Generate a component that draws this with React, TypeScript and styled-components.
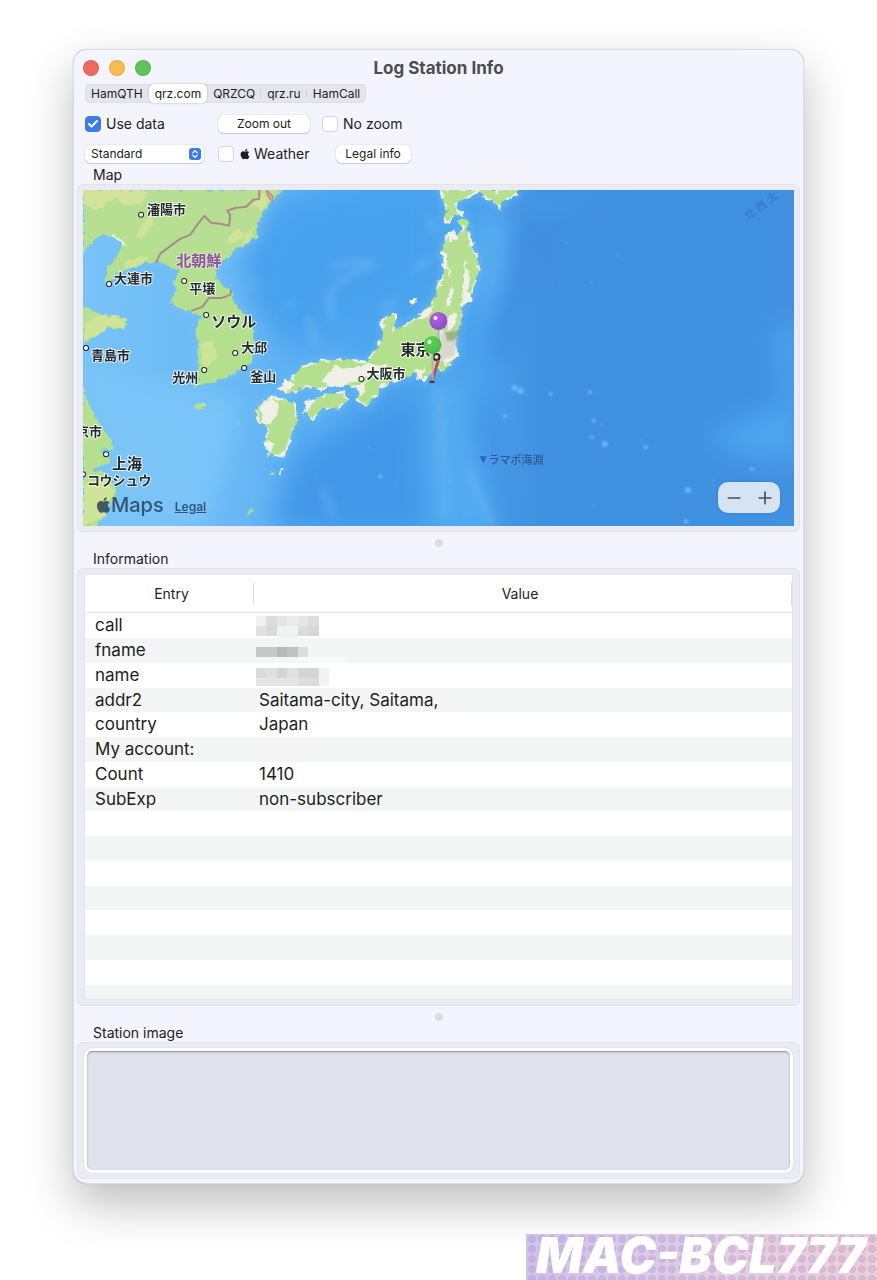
import React, { useState } from 'react';
import styled, { createGlobalStyle } from 'styled-components';
import { FaApple } from 'react-icons/fa';
import { Check, ChevronsUpDown, Minus, Plus } from 'lucide-react';

const uiFont = `Inter, "Liberation Sans", "Noto Sans CJK JP", sans-serif`;
const mapFont = `Inter, "Noto Sans CJK JP", sans-serif`;

const GlobalStyle = createGlobalStyle`
  *, *::before, *::after { box-sizing: border-box; }
  body { margin: 0; background: #fff; color: #1d1d22; font-family: ${uiFont}; font-size: 14px; }
  button, input, select { font: inherit; color: inherit; margin: 0; }
`;

const Page = styled.div`
  overflow: hidden;
  padding-top: 49px;
`;

const Window = styled.main`
  margin: 0 73px;
  padding: 0 3px 4px;
  border: 1px solid #dedee6;
  border-radius: 14px;
  background: #f4f4fe;
  box-shadow: 0 0 1px rgba(0, 0, 0, 0.25), 0 20px 46px rgba(0, 0, 0, 0.26);
`;

const TitleBar = styled.header`
  display: grid;
  grid-template-columns: 1fr auto 1fr;
  align-items: center;
  height: 34px;
  padding: 1px 6px 0;
`;

const Lights = styled.div`
  display: flex;
  gap: 10px;
`;

const Light = styled.button<{ $color: string }>`
  width: 16px;
  height: 16px;
  padding: 0;
  border: 1px solid rgba(0, 0, 0, 0.08);
  border-radius: 50%;
  background: ${(p) => p.$color};
`;

const Title = styled.h1`
  margin: 0;
  font-size: 17px;
  line-height: 20px;
  font-weight: 700;
  color: #4c4c52;
`;

const Controls = styled.div`
  padding: 0 8px 1px;
`;

const Segments = styled.div`
  display: inline-flex;
  height: 19px;
  margin-bottom: 1px;
  border-radius: 5px;
  background: #e5e5ef;
  box-shadow: inset 0 0 0 1px #dddde7;
  vertical-align: top;
`;

const Segment = styled.button<{ $active: boolean; $divided: boolean }>`
  position: relative;
  padding: 0 6px;
  border: 0;
  border-radius: 5px;
  font-size: 12px;
  line-height: 19px;
  background: ${(p) => (p.$active ? '#fff' : 'transparent')};
  box-shadow: ${(p) => (p.$active ? '0 0 2px rgba(0, 0, 0, 0.3)' : 'none')};

  &::after {
    content: '';
    display: ${(p) => (p.$divided ? 'block' : 'none')};
    position: absolute;
    right: 0;
    top: 5px;
    bottom: 5px;
    width: 1px;
    background: #cfcfda;
  }
`;

const ControlRow = styled.div`
  display: flex;
  align-items: center;
  height: 20px;
  margin-top: 10px;
`;

const LeadCell = styled.div`
  display: flex;
  width: 133px;
`;

const CheckLabel = styled.label`
  display: flex;
  align-items: center;
  gap: 5px;
  font-size: 14px;
  line-height: 20px;
`;

const CheckBox = styled.span`
  display: grid;
  width: 16px;
  height: 16px;

  input, svg { grid-area: 1 / 1; }

  input {
    appearance: none;
    width: 16px;
    height: 16px;
    border: 1px solid #d3d3dc;
    border-radius: 4px;
    background: #fff;
  }

  input:checked { border-color: #3c7be8; background: #3c7be8; }
  svg { margin: 2px; color: #fff; visibility: hidden; pointer-events: none; }
  input:checked + svg { visibility: visible; }
`;

const PushButton = styled.button<{ $wide?: boolean }>`
  width: ${(p) => (p.$wide ? 92 : 75)}px;
  height: 18px;
  padding: 0;
  border: 0;
  border-radius: 5px;
  background: #fff;
  box-shadow: 0 0 1px rgba(0, 0, 0, 0.35), 0 1px 1px rgba(0, 0, 0, 0.14);
  font-size: 12px;
  line-height: 18px;
`;

const SelectWrap = styled.div`
  display: grid;
  align-items: center;
  width: 119px;
  height: 18px;
  border-radius: 5px;
  background: #fff;
  box-shadow: 0 0 1px rgba(0, 0, 0, 0.35), 0 1px 1px rgba(0, 0, 0, 0.14);

  select {
    grid-area: 1 / 1;
    appearance: none;
    height: 18px;
    padding: 0 20px 0 6px;
    border: 0;
    background: transparent;
    font-size: 12px;
    line-height: 18px;
  }
`;

const Stepper = styled.span`
  grid-area: 1 / 1;
  justify-self: end;
  display: grid;
  place-items: center;
  width: 12px;
  height: 12px;
  margin-right: 3px;
  border-radius: 3px;
  background: #3c7be8;
  color: #fff;
  pointer-events: none;
`;

const Spacer = styled.span<{ $size: number }>`
  width: ${(p) => p.$size}px;
`;

const WeatherText = styled.span`
  display: flex;
  align-items: center;
  gap: 3px;
`;

const SectionLabel = styled.h2`
  margin: 0;
  padding: 0 16px;
  height: 19px;
  font-size: 14px;
  line-height: 19px;
  font-weight: 400;
`;

const GroupBox = styled.section`
  padding: 5px;
  border: 1px solid #e3e3ed;
  border-radius: 6px;
  background: #ebebf6;
`;

const Splitter = styled.div`
  display: flex;
  justify-content: center;
  height: 17px;
  padding-top: 7px;

  &::before {
    content: '';
    width: 8px;
    height: 8px;
    border-radius: 50%;
    background: #dcdce5;
  }
`;

const MapFrame = styled.div`
  position: relative;
  height: 336px;
  overflow: hidden;

  > svg { display: block; width: 100%; height: 100%; }
`;

const MapCredit = styled.div`
  position: absolute;
  left: 13px;
  bottom: 9px;
  display: flex;
  align-items: center;
  color: rgba(34, 58, 78, 0.8);
  font-size: 20px;
  line-height: 24px;
  font-weight: 500;

  svg { width: 15px; height: 18px; }

  a {
    margin: 4px 0 0 11px;
    color: inherit;
    font-size: 12px;
    line-height: 16px;
    font-weight: 600;
  }
`;

const ZoomPad = styled.div`
  position: absolute;
  right: 14px;
  bottom: 13px;
  display: flex;
  border-radius: 10px;
  background: #d5e3f3;
  box-shadow: 0 0 3px rgba(0, 0, 0, 0.15);

  button {
    display: grid;
    place-items: center;
    width: 31px;
    height: 31px;
    padding: 0;
    border: 0;
    background: none;
    color: #45505c;
  }
`;

const TableFrame = styled.div`
  margin: 0 1px;
  height: 426px;
  overflow: hidden;
  border: 1px solid #e4e4ea;
  background: #fff;
`;

const Table = styled.table`
  width: 100%;
  border-collapse: collapse;
  table-layout: fixed;

  th {
    position: relative;
    height: 37px;
    padding: 0;
    border-bottom: 1px solid #e3e3e5;
    font-size: 14px;
    font-weight: 400;
  }

  th:first-child { width: 169px; padding-left: 4px; }
  th:last-child { padding-right: 6px; }

  th::after {
    content: '';
    position: absolute;
    right: 0;
    top: 8px;
    height: 22px;
    width: 1px;
    background: #dcdcdf;
  }

  td {
    height: 25px;
    padding: 0 0 0 10px;
    font-size: 17px;
    line-height: 24px;
    white-space: nowrap;
  }

  td + td { padding-left: 5px; }
  tbody tr:nth-child(4n) td { height: 24px; }
  tbody tr:nth-child(even) { background: #f4f6f5; }
`;

const Mosaic = styled.svg`
  display: block;
  margin-left: -3px;
`;

const ImageWell = styled.div`
  margin: 0 1px;
  height: 125px;
  border: 3px solid #fff;
  border-radius: 8px;
  background: #e2e2ec;
  box-shadow: 0 0 1px rgba(0, 0, 0, 0.25), inset 0 1px 2px rgba(0, 0, 0, 0.4);
`;

const Footer = styled.footer`
  position: relative;
  display: flex;
  justify-content: flex-end;
  margin-top: 50px;
`;

const Watermark = styled.div`
  width: 351px;
  height: 46px;
  padding-left: 10px;
  background:
    radial-gradient(circle at 50% 50%, rgba(150, 120, 205, 0.24) 0 4px, transparent 4px) 1px 0 / 10px 10px,
    linear-gradient(100deg, #cfc3ea 0%, #dccbe6 38%, #e6cfdd 65%, #eccfd5 100%);
  color: #fff;
  font-size: 49px;
  line-height: 44px;
  font-weight: 900;
  font-style: italic;
  white-space: nowrap;
`;

type Place = { name: string; x: number; y: number; size?: number; dot?: [number, number] };

const places: Place[] = [
  { name: '瀋陽市', x: 64, y: 24, dot: [58, 25] },
  { name: '大連市', x: 31, y: 93, dot: [26, 94] },
  { name: '平壌', x: 106, y: 103, dot: [101, 91] },
  { name: 'ソウル', x: 128, y: 137, size: 15, dot: [123, 125] },
  { name: '大邱', x: 158, y: 162, dot: [152, 163] },
  { name: '青島市', x: 8, y: 170, dot: [3, 158] },
  { name: '光州', x: 89, y: 192, dot: [121, 180] },
  { name: '釜山', x: 167, y: 191, dot: [161, 178] },
  { name: '大阪市', x: 283, y: 188, dot: [278, 189] },
  { name: '東京', x: 317, y: 165, size: 15, dot: [353, 167] },
  { name: '京市', x: -7, y: 246 },
  { name: '上海', x: 29, y: 279, size: 15, dot: [23, 264] },
  { name: 'コウシュウ', x: 4, y: 295, dot: [0, 284] },
];

const continent = [
  // Manchuria and the Korean peninsula
  'M0 0H198L184 17 174 34 173 47 157 57 145 67 137 72 132 87 147 101 152 114 164 127 170 144 169 171 154 182 140 189 124 194 112 197 115 184 114 164 115 151 112 141 119 127 107 121 94 117 85 111 94 101 90 91 97 82 87 77 72 72 60 72 47 79 34 84 22 94 22 84 34 66 40 56 29 46 15 46 4 59 0 62Z',
  // Shandong
  'M0 119L10 120 19 126 34 126 44 128 42 139 24 139 10 147 0 154Z',
  // Shanghai coast
  'M0 196L7 217 17 236 30 252 30 258 17 260 27 271 10 279 24 284 32 297 32 307 17 331 15 336H0Z',
  // Jeju
  'M111 217L114 213 121 212 123 215 117 220Z',
];

const japan = [
  // Kyushu
  'M197 209L187 206 172 219 177 231 185 241 182 251 184 262 197 267 204 257 209 241 214 229 210 214Z',
  // Shikoku
  'M224 214L237 206 260 202 264 209 254 219 240 217 229 231 222 221Z',
  // Honshu
  'M195 199L204 192 220 176 237 171 264 169 284 172 290 163 300 147 299 131 309 124 312 127 309 141 324 134 337 124 350 111 357 91 362 77 357 67 360 54 365 44 374 46 380 37 375 34 375 32 384 33 385 46 389 56 395 71 394 84 387 107 379 117 377 134 372 147 374 164 364 177 357 182 353 176 347 182 340 191 337 181 324 187 300 194 292 206 284 217 274 209 274 197 260 192 237 199 224 197 204 204Z',
  // Hokkaido
  'M357 0L359 11 364 21 360 29 365 32 370 24 379 25 370 17 374 11 387 7 393 2 405 9 417 19 420 12 434 4 436 0Z',
];

const landShapes = [...continent, ...japan];

const cityAreas = [
  'M364 44L371 41 374 49 367 53Z',
  'M385 44L391 56 386 57Z',
  'M358 61L363 63 364 78 369 90 364 82 359 71 357 65Z',
  'M380 71L384 79 386 90 384 101 388 108 377 117 379 101 382 89Z',
  'M370 95L367 115 362 119 365 105Z',
  'M365 125L371 123 373 132 367 141 360 151 364 138Z',
  'M353 140L372 148 373 166 361 175 354 168Z',
  'M333 131L340 120 350 116 344 127Z',
  'M238 191L251 177 270 178 280 174 302 175 306 182 289 186 271 192 249 197Z',
  'M193 199L203 190 211 194 203 203Z',
  'M176 217L189 206 196 217 188 234 180 233Z',
  'M221 213L232 207 226 219Z',
  'M273 197L284 192 282 199 276 207Z',
  'M331 182L341 178 340 187 335 189Z',
  'M184 250L191 256 185 265 182 258Z',
  'M206 246L208 250 202 265 198 268 203 257Z',
];

const hills = [
  'M0 0H66L58 14 42 16 32 9 14 20 0 16Z',
  'M143 47L154 39 162 45 155 52 145 54Z',
  'M42 72L58 67 65 70 54 77 41 78Z',
  'M178 5L186 8 178 21 170 14Z',
  'M170 39L166 52 159 55 163 43Z',
  'M4 131L22 124 43 130 42 139 28 137 6 149 0 149Z',
  'M0 294L22 288 32 304 18 315 23 326 0 336Z',
  'M117 154L130 150 133 167 122 181 118 170Z',
  'M66 25L70 33 61 48 53 45Z',
];

const seaSparks: [number, number, number][] = [
  [482, 53, 1], [534, 66, 1], [507, 93, 1], [506, 202, 2], [510, 231, 2], [518, 235, 1],
  [508, 247, 2], [521, 254, 3], [558, 251, 1], [562, 257, 2], [604, 300, 3], [629, 290, 1],
  [668, 279, 2], [602, 331, 2], [510, 316, 1], [431, 198, 3], [437, 201, 3], [467, 204, 2], [421, 226, 2],
  [350, 204, 1], [355, 218, 1], [364, 232, 1], [361, 251, 1], [366, 291, 1], [155, 233, 2],
  [193, 126, 1], [297, 286, 2], [286, 257, 1], [373, 328, 1], [367, 211, 1],
];

function JapanMap() {
  return (
    <svg viewBox="0 0 710 336" preserveAspectRatio="xMinYMid slice" role="img" aria-label="Map of Japan and Korea">
      <defs>
        <linearGradient id="sea" x1="0" y1="0" x2="1" y2="0">
          <stop offset="0" stopColor="#78c3f8" />
          <stop offset="0.22" stopColor="#68b8f5" />
          <stop offset="0.4" stopColor="#4da5ef" />
          <stop offset="0.56" stopColor="#4ba2ed" />
          <stop offset="0.65" stopColor="#4090e1" />
          <stop offset="1" stopColor="#4191e2" />
        </linearGradient>
        <linearGradient id="land" x1="0" y1="0" x2="0" y2="1">
          <stop offset="0" stopColor="#b7df93" />
          <stop offset="1" stopColor="#b2e08c" />
        </linearGradient>
        <filter id="soft" x="-50%" y="-50%" width="200%" height="200%" colorInterpolationFilters="sRGB">
          <feGaussianBlur stdDeviation="12" />
        </filter>
        <filter id="shore" x="-20%" y="-20%" width="140%" height="140%" colorInterpolationFilters="sRGB">
          <feGaussianBlur stdDeviation="5" />
        </filter>
        <filter id="mist" x="-50%" y="-50%" width="200%" height="200%" colorInterpolationFilters="sRGB">
          <feGaussianBlur stdDeviation="4" />
        </filter>
        <filter id="glint" x="-50%" y="-50%" width="200%" height="200%" colorInterpolationFilters="sRGB">
          <feGaussianBlur stdDeviation="1" />
        </filter>
        <filter id="rough" x="-5%" y="-5%" width="110%" height="110%" colorInterpolationFilters="sRGB">
          <feTurbulence type="fractalNoise" baseFrequency="0.14" numOctaves="3" seed="4" result="n" />
          <feDisplacementMap in="SourceGraphic" in2="n" scale="7" xChannelSelector="R" yChannelSelector="G" />
        </filter>
        <radialGradient id="purplePin" cx="0.35" cy="0.3" r="0.8">
          <stop offset="0" stopColor="#b162de" />
          <stop offset="1" stopColor="#8f45c8" />
        </radialGradient>
        <radialGradient id="greenPin" cx="0.35" cy="0.3" r="0.8">
          <stop offset="0" stopColor="#62d45a" />
          <stop offset="1" stopColor="#46b944" />
        </radialGradient>
      </defs>

      <rect width="710" height="336" fill="url(#sea)" />

      <g filter="url(#soft)">
        <path d="M200 10L350 0 350 90 300 120 210 160 172 120 160 70Z" fill="#48a1ed" />
        <path d="M0 180L110 200 160 210 140 290 120 340H0Z" fill="#7ac4f8" />
        <path d="M218 260L270 235 335 205 340 300 345 340H190L200 300Z" fill="#4397e8" />
        <path d="M190 215L260 215 225 260 195 290Z" fill="#58aef2" />
        <path d="M345 190L385 190 395 250 415 336H345L338 260Z" fill="#52abf0" />
        <path d="M398 30L425 25 420 95 394 130Z" fill="#5bb0f1" />
        <path d="M436 30L460 20 440 110 420 180 412 160Z" fill="#3d8ade" />
        <path d="M400 190L425 290 440 345 420 345 392 240Z" fill="#3f8fe1" />
        <path d="M440 0H520L480 20 450 32Z" fill="#4696e6" />
        <path d="M690 140L715 130V270L660 265 620 245 700 215Z" fill="#4da6ee" />
      </g>

      <g filter="url(#mist)" fill="none" stroke="#79bff4" strokeLinecap="round" opacity="0.45">
        <path d="M252 95Q270 82 290 74M250 78Q270 66 290 76" strokeWidth="6" />
        <path d="M246 102L248 128M300 118L310 112M226 130L232 152" strokeWidth="8" />
        <path d="M198 118L212 112M165 100L172 92" strokeWidth="4" />
        <path d="M355 200L362 330M385 280L408 334" strokeWidth="6" />
        <path d="M240 300L250 325" strokeWidth="6" />
        <path d="M330 80L345 70M345 30L352 42" strokeWidth="6" />
      </g>

      <g filter="url(#shore)" fill="#78c3f5" opacity="0.6">
        {landShapes.map((d) => (
          <path key={d} d={d} stroke="#78c3f5" strokeWidth="4" />
        ))}
      </g>

      <g filter="url(#rough)">
        {continent.map((d) => (
          <path key={d} d={d} fill="url(#land)" />
        ))}
        {japan.map((d) => (
          <path key={d} d={d} fill="url(#land)" stroke="#eef1e6" strokeWidth="2" strokeDasharray="9 7 4 12 14 6" />
        ))}
        <path d="M375 33L377 29 383 28 385 34Z" fill="url(#land)" />
        {hills.map((d) => (
          <path key={d} d={d} fill="#dbe69c" opacity="0.7" />
        ))}
        {cityAreas.map((d) => (
          <path key={d} d={d} fill="#f0f0e9" />
        ))}
        <path d="M196 285L199 278M30 45L42 56M372 17L380 24" stroke="#e8f1e6" strokeWidth="2" />
        <path d="M163 325L170 320M187 284L191 282" stroke="#a5db8f" strokeWidth="3" />
        <circle cx="412" cy="2" r="2" fill="#f0f0e9" />
        <circle cx="330" cy="112" r="3" fill="#eef1e6" />
      </g>

      <g fill="none" stroke="#ad8b8c" strokeWidth="2" strokeLinejoin="round">
        <path d="M73 73L77 64 86 57 97 49 107 45 114 35 121 26 128 33 137 34 146 36 147 25 144 21 153 18 163 17 170 10 176 9 176 0" />
        <path d="M108 121L119 117 126 108 139 108 147 105 148 100" />
      </g>
      <path d="M183 0L190 7 189 12 185 7Z" fill="#e0a093" stroke="#c77f77" />

      <g fill="#7cc8f6" filter="url(#glint)">
        {seaSparks.map(([x, y, r]) => (
          <circle key={`${x}-${y}`} cx={x} cy={y} r={r} opacity="0.7" />
        ))}
      </g>

      <g fontFamily={mapFont} fontWeight="700" paintOrder="stroke" strokeLinejoin="round">
        {places.map((p) => (
          <g key={p.name}>
            {p.dot && <circle cx={p.dot[0]} cy={p.dot[1]} r="2" fill="#fff" stroke="#222" strokeWidth="2" />}
            <text x={p.x} y={p.y} fontSize={p.size ?? 13} fill="#222a2c" stroke="#fff" strokeOpacity="0.8" strokeWidth="2">
              {p.name}
            </text>
          </g>
        ))}
        <text x="93" y="76" fontSize="15" fill="#8b5794" stroke="#e7e7dd" strokeOpacity="0.7" strokeWidth="2">北朝鮮</text>
      </g>

      <g fontFamily={mapFont} fill="#2d5b91">
        <path d="M396 266H403L400 273Z" fill="#2d62c8" />
        <text x="405" y="274" fontSize="11" fontWeight="500">ラマポ海淵</text>
        <text transform="translate(664 31) rotate(-37)" fontSize="11" opacity="0.45" fontWeight="500">北 西 太</text>
      </g>

      <path d="M357 143L374 139 371 166 355 171Z" fill="#d9d8cf" filter="url(#glint)" />
      <path d="M361 142L378 140 372 150 364 151Z" fill="#80a35c" opacity="0.7" filter="url(#glint)" />
      <circle cx="353" cy="167" r="3" fill="#ddd" stroke="#252525" strokeWidth="2" />
      <path d="M348 192L355 170" stroke="#b84f5b" strokeWidth="3" />
      <path d="M355 136V162M349 160V190" stroke="#a7b4b4" strokeWidth="2" />
      <path d="M346 192H351" stroke="#493c3e" strokeWidth="2" />
      <circle cx="349" cy="155" r="9" fill="url(#greenPin)" />
      <circle cx="346" cy="152" r="2" fill="#eaffea" />
      <circle cx="355" cy="131" r="9" fill="url(#purplePin)" />
      <circle cx="352" cy="128" r="2" fill="#f7e8ff" />
    </svg>
  );
}

type Cell = [x: number, y: number, w: number, h: number, color: string];

const hidden: Record<string, Cell[]> = {
  call: [
    [0, 3, 10, 10, '#f1f1f1'], [10, 3, 11, 10, '#dddddd'], [21, 3, 10, 10, '#e4e4e4'], [31, 3, 11, 10, '#eaeaea'],
    [42, 3, 10, 10, '#e5e5e5'], [52, 3, 11, 10, '#dddddd'], [0, 13, 10, 10, '#e1e1e1'], [10, 13, 11, 10, '#d9d9d9'],
    [21, 13, 21, 12, '#f1f3f3'], [42, 13, 10, 10, '#dcdcdc'], [52, 13, 11, 10, '#d7d7d7'],
  ],
  fname: [
    [0, 9, 21, 10, '#c8c8c8'], [21, 9, 10, 10, '#b9b9b9'], [31, 9, 11, 10, '#c2c2c2'], [42, 9, 10, 10, '#dedede'],
    [42, 19, 48, 6, '#f8faf9'],
  ],
  name: [
    [0, 5, 10, 10, '#dadada'], [10, 5, 11, 10, '#e0e0e0'], [21, 5, 10, 10, '#d5d5d5'], [31, 5, 11, 10, '#e1e1e1'],
    [42, 5, 21, 10, '#d5d5d5'], [63, 5, 10, 18, '#f2f2f2'], [0, 15, 42, 8, '#e6e6e6'], [42, 15, 21, 8, '#dddddd'],
  ],
};

const records: [string, string][] = [
  ['call', ''],
  ['fname', ''],
  ['name', ''],
  ['addr2', 'Saitama-city, Saitama,'],
  ['country', 'Japan'],
  ['My account:', ''],
  ['Count', '1410'],
  ['SubExp', 'non-subscriber'],
];

const emptyRows = Array.from({ length: 8 }, (_, i) => i);
const sources = ['HamQTH', 'qrz.com', 'QRZCQ', 'qrz.ru', 'HamCall'];

function Tick({ checked, onChange, children }: { checked: boolean; onChange: (v: boolean) => void; children: React.ReactNode }) {
  return (
    <CheckLabel>
      <CheckBox>
        <input type="checkbox" checked={checked} onChange={(e) => onChange(e.target.checked)} />
        <Check size={12} strokeWidth={4} />
      </CheckBox>
      {children}
    </CheckLabel>
  );
}

export default function App() {
  const [source, setSource] = useState('qrz.com');
  const [useData, setUseData] = useState(true);
  const [noZoom, setNoZoom] = useState(false);
  const [weather, setWeather] = useState(false);

  return (
    <>
      <GlobalStyle />
      <Page>
        <Window>
          <TitleBar>
            <Lights>
              <Light $color="#ec6a5e" aria-label="Close" />
              <Light $color="#f5bd4f" aria-label="Minimize" />
              <Light $color="#5fc454" aria-label="Full screen" />
            </Lights>
            <Title>Log Station Info</Title>
          </TitleBar>

          <Controls>
            <Segments role="group" aria-label="Data source">
              {sources.map((s, i) => (
                <Segment
                  key={s}
                  $active={s === source}
                  $divided={i < sources.length - 1 && s !== source && sources[i + 1] !== source}
                  aria-pressed={s === source}
                  onClick={() => setSource(s)}
                >
                  {s}
                </Segment>
              ))}
            </Segments>
            <ControlRow>
              <LeadCell>
                <Tick checked={useData} onChange={setUseData}>Use data</Tick>
              </LeadCell>
              <PushButton $wide>Zoom out</PushButton>
              <Spacer $size={12} />
              <Tick checked={noZoom} onChange={setNoZoom}>No zoom</Tick>
            </ControlRow>
            <ControlRow>
              <LeadCell>
                <SelectWrap>
                  <select aria-label="Map type" defaultValue="Standard">
                    <option>Standard</option>
                    <option>Satellite</option>
                    <option>Hybrid</option>
                  </select>
                  <Stepper><ChevronsUpDown size={10} strokeWidth={3} /></Stepper>
                </SelectWrap>
              </LeadCell>
              <Tick checked={weather} onChange={setWeather}>
                <WeatherText>
                  <FaApple size={12} />
                  Weather
                </WeatherText>
              </Tick>
              <Spacer $size={26} />
              <PushButton>Legal info</PushButton>
            </ControlRow>
          </Controls>

          <SectionLabel>Map</SectionLabel>
          <GroupBox>
            <MapFrame>
              <JapanMap />
              <MapCredit>
                <FaApple />
                Maps
                <a href="#legal">Legal</a>
              </MapCredit>
              <ZoomPad>
                <button aria-label="Zoom map out"><Minus size={20} strokeWidth={2} /></button>
                <button aria-label="Zoom map in"><Plus size={20} strokeWidth={2} /></button>
              </ZoomPad>
            </MapFrame>
          </GroupBox>

          <Splitter />
          <SectionLabel>Information</SectionLabel>
          <GroupBox>
            <TableFrame>
              <Table>
                <thead>
                  <tr>
                    <th scope="col">Entry</th>
                    <th scope="col">Value</th>
                  </tr>
                </thead>
                <tbody>
                  {records.map(([entry, value]) => (
                    <tr key={entry}>
                      <td>{entry}</td>
                      <td>
                        {hidden[entry] ? (
                          <Mosaic width="90" height="25" aria-label="Hidden value">
                            {hidden[entry].map(([x, y, w, h, color]) => (
                              <rect key={`${x}-${y}`} x={x} y={y} width={w} height={h} fill={color} />
                            ))}
                          </Mosaic>
                        ) : (
                          value
                        )}
                      </td>
                    </tr>
                  ))}
                  {emptyRows.map((i) => (
                    <tr key={i}>
                      <td />
                      <td />
                    </tr>
                  ))}
                </tbody>
              </Table>
            </TableFrame>
          </GroupBox>

          <Splitter />
          <SectionLabel>Station image</SectionLabel>
          <GroupBox>
            <ImageWell />
          </GroupBox>
        </Window>

        <Footer>
          <Watermark>MAC-BCL777</Watermark>
        </Footer>
      </Page>
    </>
  );
}
